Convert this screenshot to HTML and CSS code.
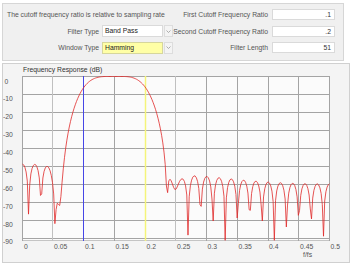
FILE: index.html
```html
<!DOCTYPE html>
<html>
<head>
<meta charset="utf-8">
<title>Filter Design</title>
<link rel="stylesheet" href="styles.css">
</head>
<body>
<div class="params">
  <div class="note">The cutoff frequency ratio is relative to sampling rate</div>
  <div class="rlabel">First Cutoff Frequency Ratio</div>
  <div class="input">.1</div>

  <div class="llabel">Filter Type</div>
  <div class="combo"><span class="ctext">Band Pass</span><span class="cbtn"><svg width="5" height="3" viewBox="0 0 5 3"><polyline points="0.5,0.5 2.5,2.5 4.5,0.5" fill="none" stroke="#999" stroke-width="0.8"/></svg></span></div>
  <div class="rlabel">Second Cutoff Frequency Ratio</div>
  <div class="input">.2</div>

  <div class="llabel">Window Type</div>
  <div class="combo hl"><span class="ctext">Hamming</span><span class="cbtn"><svg width="5" height="3" viewBox="0 0 5 3"><polyline points="0.5,0.5 2.5,2.5 4.5,0.5" fill="none" stroke="#999" stroke-width="0.8"/></svg></span></div>
  <div class="rlabel">Filter Length</div>
  <div class="input">51</div>
</div>

<div class="chart">
  <div class="ctitle">Frequency Response (dB)</div>
  <svg class="plot" width="346" height="188" viewBox="3 74 346 188">
    <rect x="22.5" y="76.5" width="307" height="164" fill="#fbfbfb"/>
    <g class="hgrid" stroke="#a4a4a4" stroke-width="1">
      <line x1="22" y1="76.5" x2="330" y2="76.5"/>
      <line x1="22" y1="94.5" x2="330" y2="94.5"/>
      <line x1="22" y1="112.5" x2="330" y2="112.5"/>
      <line x1="22" y1="130.5" x2="330" y2="130.5"/>
      <line x1="22" y1="148.5" x2="330" y2="148.5"/>
      <line x1="22" y1="166.5" x2="330" y2="166.5"/>
      <line x1="22" y1="184.5" x2="330" y2="184.5"/>
      <line x1="22" y1="202.5" x2="330" y2="202.5"/>
      <line x1="22" y1="220.5" x2="330" y2="220.5"/>
      <line x1="22" y1="238.5" x2="330" y2="238.5"/>
      <line x1="22" y1="240.5" x2="330" y2="240.5" stroke="#c4c4c4"/>
    </g>
    <g class="vgrid" stroke="#a4a4a4" stroke-width="1">
      <line x1="22.5" y1="76" x2="22.5" y2="241"/>
      <line x1="52.5" y1="76" x2="52.5" y2="241" stroke="#c0c0c0"/>
      <line x1="114.5" y1="76" x2="114.5" y2="241"/>
      <line x1="175.5" y1="76" x2="175.5" y2="241" stroke="#c0c0c0"/>
      <line x1="206.5" y1="76" x2="206.5" y2="241"/>
      <line x1="237.5" y1="76" x2="237.5" y2="241"/>
      <line x1="268.5" y1="76" x2="268.5" y2="241"/>
      <line x1="298.5" y1="76" x2="298.5" y2="241"/>
      <line x1="329.5" y1="76" x2="329.5" y2="241"/>
    </g>
    <line x1="83.5" y1="76" x2="83.5" y2="241" stroke="#4646e6" stroke-width="1"/>
    <line x1="145.5" y1="76" x2="145.5" y2="241" stroke="#f4f47a" stroke-width="1.5"/>
    <path id="curve" d="" fill="none" stroke="#e02828" stroke-width="0.8" stroke-linejoin="round"/>
    <g class="ylab">
      <text x="4.5" y="84">0</text>
      <text x="3" y="100.7">-10</text>
      <text x="3" y="118.7">-20</text>
      <text x="3" y="136.7">-30</text>
      <text x="3" y="154.7">-40</text>
      <text x="3" y="172.7">-50</text>
      <text x="3" y="190.7">-60</text>
      <text x="3" y="208.7">-70</text>
      <text x="3" y="226.7">-80</text>
      <text x="3" y="244.2">-90</text>
    </g>
    <g class="xlab">
      <text x="24" y="249.3">0</text>
      <text x="54" y="249.3">0.05</text>
      <text x="85" y="249.3">0.1</text>
      <text x="115.5" y="249.3">0.15</text>
      <text x="146.5" y="249.3">0.2</text>
      <text x="177" y="249.3">0.25</text>
      <text x="207.5" y="249.3">0.3</text>
      <text x="238.5" y="249.3">0.35</text>
      <text x="269" y="249.3">0.4</text>
      <text x="300" y="249.3">0.45</text>
      <text x="330.5" y="249.3">0.5</text>
      <text x="303" y="256.8">f/fs</text>
    </g>
  </svg>
</div>
<script src="script.js"></script>
</body>
</html>
```

FILE: styles.css
```css
* {
  box-sizing: border-box;
}

html,
body {
  margin: 0;
  padding: 0;
  background: #ffffff;
}

body {
  width: 354px;
  height: 265px;
  overflow: hidden;
  font-family: "Liberation Sans", Arial, sans-serif;
  font-size: 6.8px;
  color: #555555;
}

.params {
  margin: 3px 0 0 2px;
  width: 342px;
  height: 58px;
  border: 1px solid #d6d6d6;
  background: #f0f0f0;
  padding: 4.5px 7px 0 4px;
  display: grid;
  grid-template-columns: 95px 71px 99px 63px;
  grid-template-rows: 12px 12px 12px;
  row-gap: 4.5px;
  align-items: center;
}

.note {
  grid-column: 1 / 3;
  white-space: nowrap;
}

.llabel,
.rlabel {
  text-align: right;
  white-space: nowrap;
  padding-right: 3px;
}

.rlabel {
  padding-right: 4px;
}

.input {
  height: 11px;
  line-height: 9px;
  background: #ffffff;
  border: 1px solid #dadada;
  text-align: right;
  padding-right: 3px;
  color: #333333;
}

.combo {
  display: flex;
  gap: 1px;
  height: 12px;
}

.ctext {
  flex: 1;
  background: #ffffff;
  border: 1px solid #dadada;
  padding-left: 2px;
  line-height: 10px;
  color: #222222;
}

.combo.hl .ctext {
  background: #ffffa6;
  border-color: #d6d69c;
}

.cbtn {
  width: 9px;
  background: #f4f4f4;
  border: 1px solid #dddddd;
  display: flex;
  align-items: center;
  justify-content: center;
}

.chart {
  margin: 2px 0 0 2px;
  width: 348px;
  height: 200px;
  border: 1px solid #d0d0d0;
  background: #f4f4f4;
}

.ctitle {
  height: 10px;
  line-height: 9px;
  padding: 1px 0 0 20px;
  color: #333333;
}

.plot {
  display: block;
}

.plot text {
  font-family: "Liberation Sans", Arial, sans-serif;
  font-size: 6.8px;
  fill: #555555;
}
```

FILE: script.js
```js
(function () {
  var N = 51, f1 = 0.1, f2 = 0.2, M = N - 1;
  var h = [];
  for (var n = 0; n < N; n++) {
    var k = n - M / 2;
    var v;
    if (k === 0) {
      v = 2 * (f2 - f1);
    } else {
      v = (Math.sin(2 * Math.PI * f2 * k) - Math.sin(2 * Math.PI * f1 * k)) / (Math.PI * k);
    }
    var w = 0.54 - 0.46 * Math.cos(2 * Math.PI * n / M);
    h.push(v * w);
  }
  var S = 256, pts = [];
  for (var i = 0; i <= S; i++) {
    var f = 0.5 * i / S, re = 0, im = 0;
    for (var m = 0; m < N; m++) {
      re += h[m] * Math.cos(2 * Math.PI * f * m);
      im -= h[m] * Math.sin(2 * Math.PI * f * m);
    }
    var db = 20 * Math.log10(Math.sqrt(re * re + im * im) + 1e-12);
    if (db > 0) db = 0;
    if (db < -91) db = -91;
    var x = 22.5 + f * 614;
    var y = 76.5 - db * 1.8;
    pts.push(x.toFixed(2) + "," + y.toFixed(2));
  }
  document.getElementById("curve").setAttribute("d", "M" + pts.join("L"));
})();
```
